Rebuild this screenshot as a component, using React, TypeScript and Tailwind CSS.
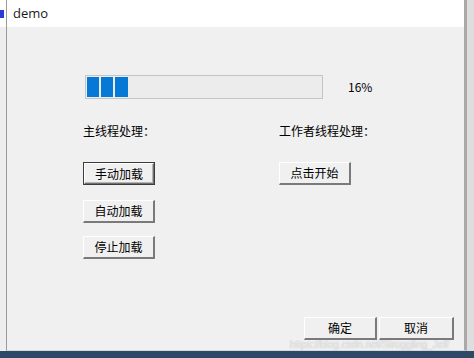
import React from "react";

const font = { fontFamily: '"Noto Sans CJK SC", "Noto Sans", sans-serif' };

function Btn({ label, def = false, w = "w-[72px]" }: { label: string; def?: boolean; w?: string }) {
  if (def) {
    return (
      <div className={`${w} h-[23px] border border-[#3c3c3c] flex`}>
        <div className="flex-1 flex items-center justify-center bg-[#f0f0f0] border-t border-l border-t-white border-l-white border-r border-b border-r-[#6f6f6f] border-b-[#6f6f6f] shadow-[inset_-1px_-1px_0_#b4b4b4] text-[12px] text-black leading-none">
          {label}
        </div>
      </div>
    );
  }
  return (
    <div className={`${w} h-[23px] flex items-center justify-center bg-[#f0f0f0] border-t border-l border-t-white border-l-white border-r-2 border-b-2 border-r-[#7a7a7a] border-b-[#7a7a7a] text-[12px] text-black leading-none`}>
      {label}
    </div>
  );
}

export default function App() {
  return (
    <div className="w-[474px] h-[358px] relative overflow-hidden bg-[#e6e6e6] flex flex-col" style={font}>
      <div className="flex h-[351px]">
        <div className="w-[6px] flex flex-col bg-[#ececec]">
          <div className="h-[27px] bg-white flex items-start pt-[10px]">
            <div className="w-[4px] h-[8px] bg-[#2a3cd8]" />
          </div>
          <div className="flex-1 bg-[#eeeeee]" />
        </div>
        <div className="w-[461px] flex flex-col border-l border-[#9a9a9a] border-r-[3px] border-r-[#a9a9a9] border-b border-b-[#d8d8d8]">
          <div className="h-[27px] bg-white flex items-center pl-[6px] text-[13px] text-[#1a1a1a]" style={{ fontFamily: '"Open Sans", "Noto Sans", sans-serif' }}>
            demo
          </div>
          <div className="flex-1 bg-[#f0f0f0] flex flex-col pl-[76px] pr-[10px] pb-[10px]">
            <div className="mt-[48px] flex items-center">
              <div className="ml-[2px] w-[238px] h-[24px] border border-[#c4c4c4] bg-[#ececec] flex items-stretch gap-[2px] p-[1px]">
                <div className="w-[12px] bg-[#0679d6]" />
                <div className="w-[12px] bg-[#0679d6]" />
                <div className="w-[13px] bg-[#0679d6]" />
              </div>
              <div className="ml-[25px] text-[12px] text-black">16%</div>
            </div>
            <div className="mt-[24px] flex text-[12px] text-black leading-[16px]">
              <div className="w-[196px]">主线程处理：</div>
              <div>工作者线程处理：</div>
            </div>
            <div className="mt-[23px] flex">
              <div className="w-[196px] flex flex-col">
                <Btn label="手动加载" def />
                <div className="mt-[15px]"><Btn label="自动加载" /></div>
                <div className="mt-[13px]"><Btn label="停止加载" /></div>
              </div>
              <div>
                <Btn label="点击开始" />
              </div>
            </div>
            <div className="mt-auto flex justify-end gap-[2px]">
              <Btn label="确定" w="w-[73px]" />
              <Btn label="取消" w="w-[75px]" />
            </div>
          </div>
        </div>
        <div className="flex-1 bg-[#dedede]" />
      </div>
      <div className="flex-1 bg-[#2e4867]" />
      <div className="absolute left-[290px] top-[340px] text-[10px] text-white/80 leading-none whitespace-nowrap [text-shadow:0_0_1px_#9a9a9a]" style={{ fontFamily: '"Liberation Sans", sans-serif' }}>
        https://blog.csdn.net/Struggling_Jeff
      </div>
    </div>
  );
}
